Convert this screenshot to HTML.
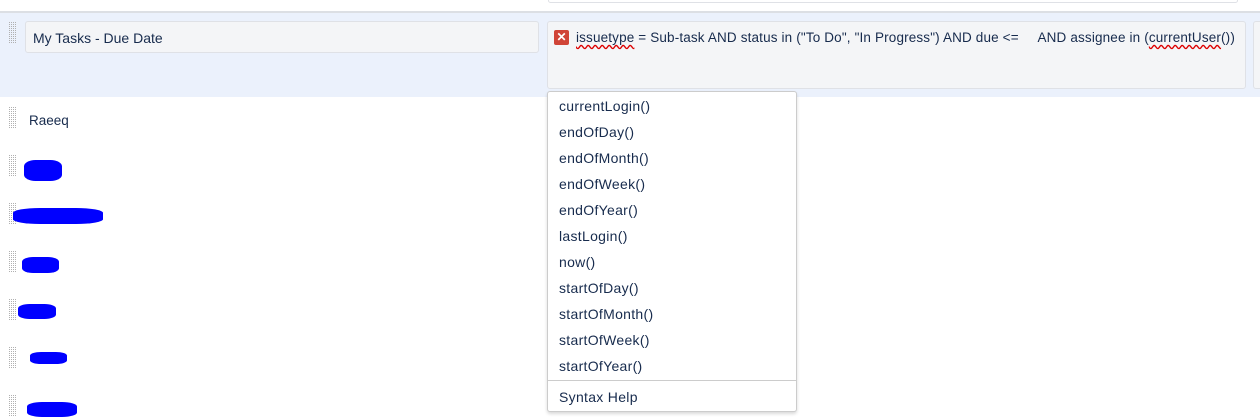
<!DOCTYPE html>
<html><head><style>
*{margin:0;padding:0;box-sizing:border-box}
body{width:1260px;height:417px;overflow:hidden;background:#fff;font-family:"Liberation Sans",sans-serif;font-size:13px;color:#172b4d;position:relative}
.abs{position:absolute}
.h{position:absolute;width:8px;height:22px;background:conic-gradient(#b0b0b0 25%,transparent 0);background-size:2px 2px}
.blob{position:absolute;background:#0000ff;border-radius:30%}
.item{position:absolute;left:11px;font-size:14px;color:#172b4d;letter-spacing:0.3px}
</style></head><body>
<div class="abs" style="left:0;top:0;width:1260px;height:11px;background:#fff"></div>
<div class="abs" style="left:548px;top:-2px;width:690px;height:5px;border:1px solid #dfe1e6;border-radius:3px"></div>
<div class="abs" style="left:0;top:11px;width:1260px;height:2px;background:#dcdfe4"></div>
<div class="abs" style="left:0;top:13px;width:1260px;height:84px;background:#ebf1fc"></div>
<div class="h" style="left:8px;top:22px"></div>
<div class="abs" style="left:25px;top:21px;width:514px;height:32px;background:#f4f5f7;border:1px solid #dfe1e6;border-radius:3px;padding:8px 7px;font-size:14px">My Tasks - Due Date</div>
<div class="abs" style="left:547px;top:21px;width:699px;height:68px;background:#f4f5f7;border:1px solid #dfe1e6;border-radius:3px"></div>
<div class="abs" style="left:554px;top:30px;width:15px;height:15px;background:#d04437;border-radius:2px;color:#fff;font-weight:bold;font-size:12px;text-align:center;line-height:15px">✕</div>
<div class="abs" style="left:576px;top:30px;font-size:13.5px;white-space:pre;letter-spacing:0.15px"><span style="text-decoration:underline wavy #d00;text-underline-offset:2px">issuetype</span> = Sub-task AND status in ("To Do", "In Progress") AND due &lt;=     AND assignee in (<span style="text-decoration:underline wavy #d00;text-underline-offset:2px">currentUser</span>())</div>
<div class="abs" style="left:1253px;top:21px;width:10px;height:68px;background:#f4f5f7;border:1px solid #dfe1e6;border-radius:3px"></div>
<div class="h" style="left:8px;top:107px"></div>
<div class="abs" style="left:29px;top:113px;font-size:13.5px">Raeeq</div>
<div class="h" style="left:8px;top:155px"></div><div class="blob" style="left:24px;top:160px;width:38px;height:21px"></div>
<div class="h" style="left:8px;top:203px"></div><div class="blob" style="left:13px;top:208px;width:90px;height:16px"></div>
<div class="h" style="left:8px;top:251px"></div><div class="blob" style="left:22px;top:257px;width:37px;height:16px"></div>
<div class="h" style="left:8px;top:299px"></div><div class="blob" style="left:18px;top:304px;width:38px;height:15px"></div>
<div class="h" style="left:8px;top:347px"></div><div class="blob" style="left:30px;top:352px;width:37px;height:12px"></div>
<div class="h" style="left:8px;top:395px"></div><div class="blob" style="left:27px;top:402px;width:50px;height:15px"></div>
<div class="abs" style="left:547px;top:91px;width:250px;height:321px;background:#fff;border:1px solid #ccc;border-radius:3px;box-shadow:0 2px 3px rgba(0,0,0,.15)">
<div class="item" style="top:6px">currentLogin()</div>
<div class="item" style="top:32px">endOfDay()</div>
<div class="item" style="top:58px">endOfMonth()</div>
<div class="item" style="top:84px">endOfWeek()</div>
<div class="item" style="top:110px">endOfYear()</div>
<div class="item" style="top:136px">lastLogin()</div>
<div class="item" style="top:162px">now()</div>
<div class="item" style="top:188px">startOfDay()</div>
<div class="item" style="top:214px">startOfMonth()</div>
<div class="item" style="top:240px">startOfWeek()</div>
<div class="item" style="top:266px">startOfYear()</div>
<div class="abs" style="left:0;top:288px;width:248px;height:1px;background:#ccc"></div>
<div class="item" style="top:297px">Syntax Help</div>
</div>
</body></html>
